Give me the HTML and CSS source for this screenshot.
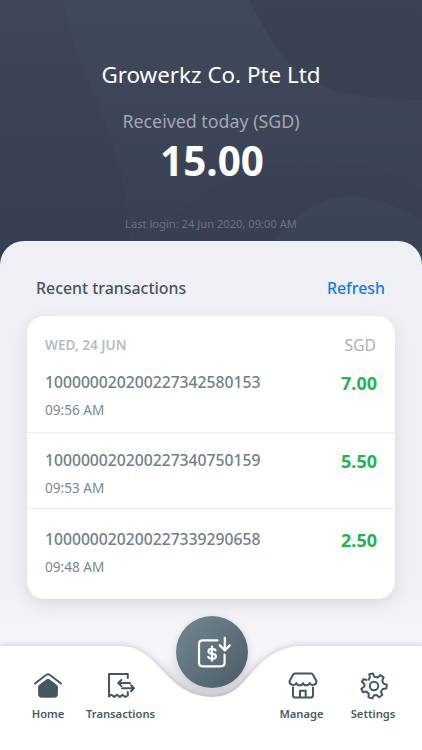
FILE: index.html
```html
<!DOCTYPE html>
<html lang="en">
<head>
  <meta charset="UTF-8">
  <meta name="viewport" content="width=device-width, initial-scale=1.0">
  <title>Growerkz Co. Pte Ltd</title>
  <link rel="stylesheet" href="styles.css">
</head>
<body>
  <div class="app">
    <!-- Header waves -->
    <svg class="waves" viewBox="0 0 422 280" aria-hidden="true">
      <defs>
        <linearGradient id="waveLeft" x1="0" y1="0" x2="0" y2="1">
          <stop offset="0" stop-color="#3c4354"/>
          <stop offset="1" stop-color="#363b4f"/>
        </linearGradient>
      </defs>
      <path d="M0 0H64C68 62 128 130 130 240V280H0Z" fill="url(#waveLeft)" opacity=".5"/>
      <path d="M249 0C283 62 296 100 422 100V0Z" fill="#383e50" opacity=".6"/>
      <path d="M120 280C190 190 240 162 310 162C360 162 400 170 422 192V280Z" fill="#363d50" opacity=".15"/>
      <path d="M270 245C295 215 320 196 350 196C380 197 400 209 422 220V280H270Z" fill="#3e475c" opacity=".6"/>
    </svg>

    <header class="summary">
      <h1 class="company">Growerkz Co. Pte Ltd</h1>
      <p class="received">Received today (SGD)</p>
      <p class="total">15.00</p>
      <p class="last-login">Last login: 24 Jun 2020, 09:00 AM</p>
    </header>

    <main class="sheet">
      <div class="sheet-head">
        <h2>Recent transactions</h2>
        <a href="#">Refresh</a>
      </div>

      <section class="card">
        <div class="card-head">
          <span class="date">WED, 24 JUN</span>
          <span class="currency">SGD</span>
        </div>
        <div class="row first">
          <div>
            <p class="ref">100000020200227342580153</p>
            <p class="time">09:56 AM</p>
          </div>
          <span class="amount">7.00</span>
        </div>
        <div class="row second">
          <div>
            <p class="ref">100000020200227340750159</p>
            <p class="time">09:53 AM</p>
          </div>
          <span class="amount">5.50</span>
        </div>
        <div class="row third">
          <div>
            <p class="ref">100000020200227339290658</p>
            <p class="time">09:48 AM</p>
          </div>
          <span class="amount">2.50</span>
        </div>
      </section>
    </main>

    <nav class="tabbar">
      <svg class="tabbar-shape" viewBox="0 0 422 124" aria-hidden="true">
        <defs>
          <linearGradient id="dip" x1="0" y1="0" x2="0" y2="1">
            <stop offset="0" stop-color="#d9dadd" stop-opacity="0"/>
            <stop offset="1" stop-color="#d9dadd"/>
          </linearGradient>
        </defs>
        <path d="M150 30H270V40C243 60 236 71 212 71C188 71 174 57 158 41Z" fill="url(#dip)"/>
        <path class="bar" d="M0 20H120C139 20 149 31 158 40C174 57 188 71 212 71C236 71 243 55 258 40C270 28 284 20 302 20H422V124H0Z" fill="#fff"/>
      </svg>

      <a class="tab home" href="#">
        <svg viewBox="0 0 30 30">
          <path d="M2 12.5 13.4 3.8Q15 2.6 16.6 3.8L28 12.5" class="line"/>
          <path d="M13.6 8.3Q15 7.2 16.4 8.3L23.7 13.7Q24.9 14.6 24.9 16V22.8Q24.9 26.8 21 26.8H9Q5.1 26.8 5.1 22.8V16Q5.1 14.6 6.3 13.7Z" class="solid"/>
        </svg>
        <span>Home</span>
      </a>
      <a class="tab transactions" href="#">
        <svg viewBox="0 0 30 30">
          <path d="M21.8 7V3H3V25.4L5.4 23.7 8.2 25.9 11 23.7 13.8 25.9 16.6 23.7 19.2 25.9 21.8 24.7V21" class="line"/>
          <path d="M24 12H12.5M15.4 9 12.2 12 15.4 15M16 17.2H28M25 14.2 28 17.2 25 20.2" class="line"/>
        </svg>
        <span>Transactions</span>
      </a>

      <a class="receive" href="#" aria-label="Receive">
        <svg viewBox="0 0 44 44">
          <path d="M27.5 10.3H12.8Q9 10.3 9 14.1V32.6Q9 36.4 12.8 36.4H30.8Q34.6 36.4 34.6 32.6V24.5"/>
          <path d="M34.8 7.8V20M29.8 15.4 34.8 20.4 39.8 15.4"/>
          <path d="M22 16.7V30.7M25.7 20.4Q24.9 18.9 22 18.9Q18.5 18.9 18.5 21.2Q18.5 23.3 22 23.7Q25.9 24.2 25.9 26.4Q25.9 28.7 22 28.7Q19.1 28.7 18.2 27"/>
        </svg>
      </a>

      <a class="tab manage" href="#">
        <svg viewBox="0 0 30 30">
          <path d="M6.8 2.6H23.2Q24.4 2.6 25 3.7L28.5 10.2C28.5 14.6 22.9 14.9 21.7 12.1C20.6 15 16 15 15 12.1C14 15 9.4 15 8.3 12.1C7.1 14.9 1.5 14.6 1.5 10.2L5 3.7Q5.6 2.6 6.8 2.6Z" class="line"/>
          <path d="M5 16.5V24.2Q5 26.6 7.4 26.6H22.6Q25 26.6 25 24.2V16.5M12 26.3V19.7H17.7V26.3" class="line"/>
        </svg>
        <span>Manage</span>
      </a>
      <a class="tab settings" href="#">
        <svg viewBox="0 0 30 30">
          <circle cx="15" cy="15" r="4.2" class="line"/>
          <path d="M9.7 8.7 11 6.2 10.2 3.3 14 2.6 15.4 5.8 18.8 6.4 21.4 4 24.6 6.4 23.2 9.7 24.5 12.6 27.9 13.7 27.3 17.4 23.8 18 22 20.8 23.3 24 20.2 26.2 17.6 23.9 15 24.2 13.2 27.4 9.5 26.4 9.8 22.8 7.4 20.5 4 21.2 2.3 17.8 5.3 15.5 5.4 12.9 2.9 10.9 4.7 8.1 7.5 9" class="line"/>
        </svg>
        <span>Settings</span>
      </a>
    </nav>
  </div>
</body>
</html>
```
FILE: styles.css
```css
body {
  margin: 0;
  font-family: "Noto Sans", "Open Sans", sans-serif;
  background-color: #fff;
}

h1, h2, p {
  margin: 0;
  font-weight: 400;
}

a {
  text-decoration: none;
}

.app {
  position: relative;
  width: 422px;
  height: 750px;
  overflow: hidden;
  display: flex;
  flex-direction: column;
  background: linear-gradient(#40495b, #383f52 270px);
}

.waves {
  position: absolute;
  top: 0;
  left: 0;
  width: 422px;
  height: 280px;
}

/* Header */
.summary {
  position: relative;
  box-sizing: border-box;
  height: 241px;
  padding-top: 60px;
  text-align: center;
  color: #fff;
}

.company {
  font-size: 22.4px;
  line-height: 30px;
}

.received {
  margin-top: 18px;
  font-size: 17.8px;
  line-height: 26px;
  color: #a3a7b3;
}

.total {
  margin-top: 2px;
  font-size: 40.4px;
  line-height: 50px;
  font-weight: 700;
  text-indent: 2px;
}

.last-login {
  margin-top: 30px;
  font-size: 11.15px;
  line-height: 16px;
  color: #6c7283;
}

/* Sheet */
.sheet {
  position: relative;
  flex: 1;
  padding: 35px 27px 0;
  border-radius: 24px 24px 0 0;
  background: linear-gradient(#eff0f5 340px, #f5f5fa 400px);
}

.sheet-head {
  display: flex;
  justify-content: space-between;
  padding: 0 10px 0 9px;
  font-size: 15.9px;
  line-height: 24px;
}

.sheet-head h2 {
  font-size: 15.9px;
  font-weight: 500;
  color: #47545d;
}

.sheet-head a {
  font-weight: 500;
  color: #157af0;
}

.card {
  box-sizing: border-box;
  height: 283px;
  margin-top: 16px;
  border-radius: 18px;
  background-color: #fff;
  box-shadow: 0 6px 16px rgba(40, 45, 65, 0.1);
}

.card-head {
  display: flex;
  justify-content: space-between;
  padding: 18px 19px 0 18px;
  line-height: 22px;
}

.date {
  font-size: 13.6px;
  font-weight: 600;
  color: #b5bec4;
}

.currency {
  font-size: 15.7px;
  color: #adb0b3;
}

.row {
  box-sizing: border-box;
  display: flex;
  justify-content: space-between;
  padding: 0 18px;
}

.first {
  height: 77px;
  padding-top: 14px;
  border-bottom: 1px solid #ebedef;
}

.second {
  height: 76px;
  padding-top: 15px;
  border-bottom: 1px solid #ebedef;
}

.third {
  padding-top: 18px;
}

.ref {
  font-size: 15.7px;
  line-height: 24px;
  font-weight: 500;
  color: #6f8089;
}

.time {
  margin-top: 6px;
  font-size: 13.6px;
  line-height: 20px;
  color: #788992;
}

.amount {
  font-size: 18px;
  line-height: 26px;
  font-weight: 700;
  color: #28b351;
}

/* Bottom tab bar */
.tabbar {
  position: absolute;
  left: 0;
  right: 0;
  bottom: 0;
  height: 104px;
  display: grid;
  grid-template-columns: 96px 49px 134px 45px 98px;
  justify-items: center;
}

.tabbar-shape {
  position: absolute;
  left: 0;
  bottom: 0;
  width: 422px;
  height: 124px;
}

.bar {
  filter: drop-shadow(0 -1px 3px rgba(40, 45, 60, 0.2));
}

.tab {
  position: relative;
  display: flex;
  flex-direction: column;
  align-items: center;
  padding-top: 25px;
  font-size: 11.2px;
  line-height: 16px;
  font-weight: 600;
  color: #4a5a63;
}

.tab svg {
  width: 30px;
  height: 30px;
  margin-bottom: 5px;
}

.manage svg {
  margin-left: 4px;
}

.settings svg {
  margin-left: 2px;
}

.line {
  fill: none;
  stroke: #465760;
  stroke-width: 2;
  stroke-linecap: round;
  stroke-linejoin: round;
}

.solid {
  fill: #465760;
}

.receive {
  position: relative;
  width: 72px;
  height: 72px;
  margin-top: -30px;
  border-radius: 50%;
  display: flex;
  align-items: center;
  justify-content: center;
  background: linear-gradient(135deg, #758891, #4a5b64);
  box-shadow: 0 2px 8px rgba(40, 50, 60, 0.15);
}

.receive svg {
  width: 44px;
  height: 44px;
  fill: none;
  stroke: #fff;
  stroke-width: 2.2;
  stroke-linecap: round;
  stroke-linejoin: round;
}
```
